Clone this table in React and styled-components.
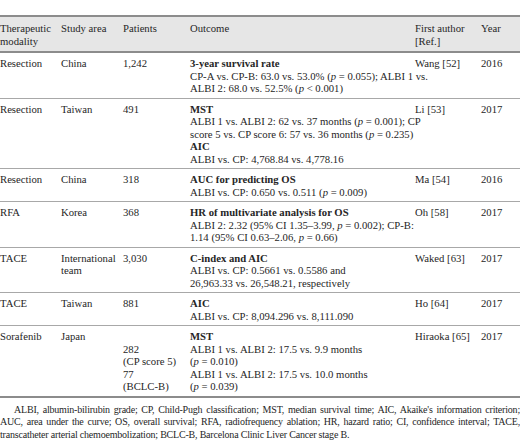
import React from "react";
import styled, { createGlobalStyle } from "styled-components";

const GlobalStyle = createGlobalStyle`
  body {
    margin: 0;
    background: #ffffff;
  }
`;

const rows = [
  {
    modality: "Resection",
    area: "China",
    patients: ["1,242"],
    outcome: [
      { b: "3-year survival rate" },
      ["CP-A vs. CP-B: 63.0 vs. 53.0% (", { i: "p" }, " = 0.055); ALBI 1 vs."],
      ["ALBI 2: 68.0 vs. 52.5% (", { i: "p" }, " < 0.001)"],
    ],
    author: "Wang [52]",
    year: "2016",
  },
  {
    modality: "Resection",
    area: "Taiwan",
    patients: ["491"],
    outcome: [
      { b: "MST" },
      ["ALBI 1 vs. ALBI 2: 62 vs. 37 months (", { i: "p" }, " = 0.001); CP"],
      ["score 5 vs. CP score 6: 57 vs. 36 months (", { i: "p" }, " = 0.235)"],
      { b: "AIC" },
      ["ALBI vs. CP: 4,768.84 vs. 4,778.16"],
    ],
    author: "Li [53]",
    year: "2017",
  },
  {
    modality: "Resection",
    area: "China",
    patients: ["318"],
    outcome: [
      { b: "AUC for predicting OS" },
      ["ALBI vs. CP: 0.650 vs. 0.511 (", { i: "p" }, " = 0.009)"],
    ],
    author: "Ma [54]",
    year: "2016",
  },
  {
    modality: "RFA",
    area: "Korea",
    patients: ["368"],
    outcome: [
      { b: "HR of multivariate analysis for OS" },
      ["ALBI 2: 2.32 (95% CI 1.35–3.99, ", { i: "p" }, " = 0.002); CP-B:"],
      ["1.14 (95% CI 0.63–2.06, ", { i: "p" }, " = 0.66)"],
    ],
    author: "Oh [58]",
    year: "2017",
  },
  {
    modality: "TACE",
    area: "International team",
    patients: ["3,030"],
    outcome: [
      { b: "C-index and AIC" },
      ["ALBI vs. CP: 0.5661 vs. 0.5586 and"],
      ["26,963.33 vs. 26,548.21, respectively"],
    ],
    author: "Waked [63]",
    year: "2017",
  },
  {
    modality: "TACE",
    area: "Taiwan",
    patients: ["881"],
    outcome: [{ b: "AIC" }, ["ALBI vs. CP: 8,094.296 vs. 8,111.090"]],
    author: "Ho [64]",
    year: "2017",
  },
  {
    modality: "Sorafenib",
    area: "Japan",
    patients: ["\u00a0", "282", "(CP score 5)", "77", "(BCLC-B)"],
    outcome: [
      { b: "MST" },
      ["ALBI 1 vs. ALBI 2: 17.5 vs. 9.9 months"],
      ["(", { i: "p" }, " = 0.010)"],
      ["ALBI 1 vs. ALBI 2: 17.5 vs. 10.0 months"],
      ["(", { i: "p" }, " = 0.039)"],
    ],
    author: "Hiraoka [65]",
    year: "2017",
  },
];

const renderPart = (part, i) => {
  if (typeof part === "string") return <React.Fragment key={i}>{part}</React.Fragment>;
  return <em key={i}>{part.i}</em>;
};

const App = () => {
  return (
    <>
      <GlobalStyle />
      <Wrap>
        <Table>
          <colgroup>
            <col style={{ width: 61 }} />
            <col style={{ width: 62 }} />
            <col style={{ width: 67 }} />
            <col style={{ width: 225 }} />
            <col style={{ width: 66 }} />
            <col style={{ width: 39 }} />
          </colgroup>
          <thead>
            <HeadRow>
              <Th>Therapeutic modality</Th>
              <Th>Study area</Th>
              <Th>Patients</Th>
              <Th>Outcome</Th>
              <Th>First author [Ref.]</Th>
              <Th>Year</Th>
            </HeadRow>
          </thead>
          <tbody>
            {rows.map((row, index) => (
              <Row key={index} $last={index === rows.length - 1}>
                <Td>{row.modality}</Td>
                <Td>{row.area}</Td>
                <Td>
                  {row.patients.map((p, i) => (
                    <Line key={i}>{p}</Line>
                  ))}
                </Td>
                <Td>
                  {row.outcome.map((line, i) =>
                    line.b ? (
                      <Line key={i} $bold>
                        {line.b}
                      </Line>
                    ) : (
                      <Line key={i}>{line.map(renderPart)}</Line>
                    )
                  )}
                </Td>
                <Td>{row.author}</Td>
                <Td>{row.year}</Td>
              </Row>
            ))}
          </tbody>
        </Table>
        <Footnote>
          ALBI, albumin-bilirubin grade; CP, Child-Pugh classification; MST,
          median survival time; AIC, Akaike's information criterion; AUC, area
          under the curve; OS, overall survival; RFA, radiofrequency ablation;
          HR, hazard ratio; CI, confidence interval; TACE, transcatheter
          arterial chemoembolization; BCLC-B, Barcelona Clinic Liver Cancer
          stage B.
        </Footnote>
      </Wrap>
    </>
  );
};

const Wrap = styled.div`
  width: 520px;
  padding-top: 15px;
  font-family: "Liberation Serif", "DejaVu Serif", serif;
  font-size: 10.7px;
  line-height: 12.5px;
  color: #262626;
`;

const Table = styled.table`
  width: 520px;
  table-layout: fixed;
  border-collapse: collapse;
  border-top: 2px solid #8c8c8c;
`;

const HeadRow = styled.tr`
  background: #e6e6e6;
  border-bottom: 2px solid #8c8c8c;
`;

const Th = styled.th`
  text-align: left;
  font-weight: normal;
  vertical-align: top;
  padding: 5px 4px 4px 0;
`;

const Row = styled.tr`
  border-bottom: ${(p) => (p.$last ? "2px solid #8c8c8c" : "1.5px solid #a8a8a8")};
`;

const Td = styled.td`
  vertical-align: top;
  padding: 4px 4px 3px 0;
`;

const Line = styled.div`
  white-space: nowrap;
  font-weight: ${(p) => (p.$bold ? "bold" : "normal")};
  em {
    font-style: italic;
  }
`;

const Footnote = styled.p`
  margin: 0;
  padding: 6px 0 9px;
  font-size: 10px;
  letter-spacing: -0.2px;
  text-indent: 14px;
  text-align: justify;
  border-bottom: 2px solid #8c8c8c;
`;

export default App;
